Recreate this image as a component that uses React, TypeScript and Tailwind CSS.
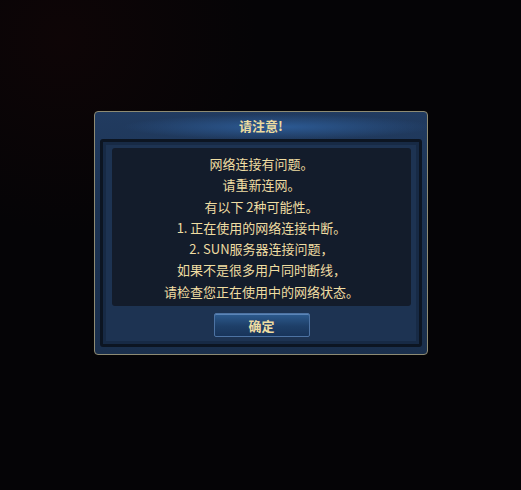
import React from 'react';

const lines = [
  '网络连接有问题。',
  '请重新连网。',
  '有以下 2种可能性。',
  '1. 正在使用的网络连接中断。',
  '2. SUN服务器连接问题，',
  '如果不是很多用户同时断线，',
  '请检查您正在使用中的网络状态。',
];

const font = { fontFamily: '"Noto Sans CJK SC", "Noto Sans", sans-serif' };

const App = () => {
  return (
    <div
      className="w-[521px] h-[490px] overflow-hidden bg-[#050406] bg-[radial-gradient(ellipse_at_12%_8%,#0e0506_0%,transparent_30%)] pt-[111px] pl-[94px]"
      style={font}
    >
      <div className="w-[334px] h-[244px] flex flex-col border border-[#8e8b73] rounded-[4px] bg-[linear-gradient(180deg,#213b60_0%,#1c3352_40%,#1a2f4c_100%)]">
        {/* title */}
        <div className="h-[27px] shrink-0 flex items-center justify-center bg-[radial-gradient(ellipse_at_55%_55%,#2c5a94_0%,transparent_60%)]">
          <span className="text-[13px] font-bold text-[#ecdb9f] leading-none">请注意!</span>
        </div>

        {/* inner frame */}
        <div className="mx-[5px] h-[208px] shrink-0 flex flex-col border-[3px] border-[#0c1522] rounded-[3px] bg-[#1d3352] shadow-[inset_0_0_0_3px_#172a45] pl-[9px] pr-[8px] pt-[6px] pb-[7px]">
          <div className="h-[158px] shrink-0 flex flex-col items-center pt-[5px] bg-[#131c2b] rounded-[3px]">
            {lines.map((l) => (
              <div key={l} className="text-[13px] leading-[21.3px] text-[#efdda2]">
                {l}
              </div>
            ))}
          </div>
          <button className="mx-auto mt-[7px] w-[96px] h-[24px] shrink-0 flex items-center justify-center border border-[#4d73a3] rounded-[2px] bg-[linear-gradient(180deg,#2d5b8f_0%,#1e3f68_55%,#18345a_100%)] shadow-[inset_0_1px_0_#5b85b8]">
            <span className="text-[13px] font-bold text-[#efdda2] leading-none">确定</span>
          </button>
        </div>
      </div>
    </div>
  );
};

export default App;
